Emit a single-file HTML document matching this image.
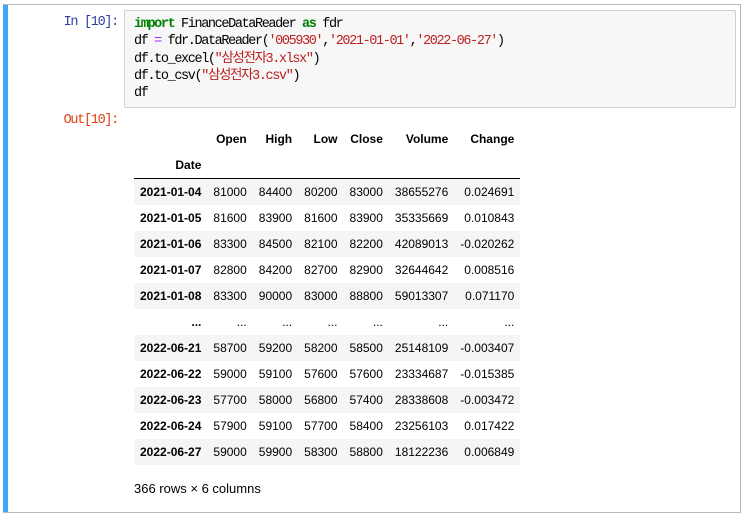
<!DOCTYPE html>
<html><head><meta charset="utf-8"><style>
body{margin:0;width:745px;height:516px;background:#fff;position:relative;overflow:hidden;font-family:"Liberation Sans","Noto Sans CJK KR",sans-serif}
.cell{position:absolute;left:3px;top:4px;width:737px;height:507px;border:1px solid #b8b8b8;border-left:none}
.bar{position:absolute;left:3px;top:5px;width:5px;height:507px;background:#42a5f5}
.pin{position:absolute;right:627px;font-family:"Liberation Mono",monospace;font-size:13.5px;letter-spacing:-1.3px}
.code{position:absolute;left:124px;top:10px;width:610px;height:96px;background:#f7f7f7;border:1px solid #cfcfcf;border-radius:2px}
pre{margin:0;position:absolute;left:9px;top:5px;font-family:"Liberation Mono","Noto Sans CJK KR",monospace;font-size:13.5px;letter-spacing:-1.38px;line-height:17.3px;color:#000}
.k{color:#008000;font-weight:bold}.s{color:#ba2121}.o{color:#aa22ff}
table{position:absolute;left:134px;top:126px;border-collapse:collapse;font-size:12px;color:#000}
td,th{text-align:right;padding:0 6px;height:26px;white-space:nowrap}
th{font-weight:bold}
tbody tr:nth-child(odd){background:#f5f5f5}
thead tr:last-child th{border-bottom:1px solid #000}
</style></head><body>
<div class="cell"></div><div class="bar"></div>
<div class="pin" style="top:15px;color:#303f9f">In [10]:</div>
<div class="pin" style="top:113px;color:#d84315">Out[10]:</div>
<div class="code"><pre><span class="k">import</span> FinanceDataReader <span class="k">as</span> fdr
df <span class="o">=</span> fdr.DataReader(<span class="s">'005930'</span>,<span class="s">'2021-01-01'</span>,<span class="s">'2022-06-27'</span>)
df.to_excel(<span class="s">"삼성전자3.xlsx"</span>)
df.to_csv(<span class="s">"삼성전자3.csv"</span>)
df</pre></div>
<table>
<thead>
<tr><th></th><th>Open</th><th>High</th><th>Low</th><th>Close</th><th style="padding-left:14px">Volume</th><th style="padding-left:14px">Change</th></tr>
<tr><th>Date</th><th></th><th></th><th></th><th></th><th></th><th></th></tr>
</thead>
<tbody>
<tr><th>2021-01-04</th><td>81000</td><td>84400</td><td>80200</td><td>83000</td><td>38655276</td><td>0.024691</td></tr>
<tr><th>2021-01-05</th><td>81600</td><td>83900</td><td>81600</td><td>83900</td><td>35335669</td><td>0.010843</td></tr>
<tr><th>2021-01-06</th><td>83300</td><td>84500</td><td>82100</td><td>82200</td><td>42089013</td><td>-0.020262</td></tr>
<tr><th>2021-01-07</th><td>82800</td><td>84200</td><td>82700</td><td>82900</td><td>32644642</td><td>0.008516</td></tr>
<tr><th>2021-01-08</th><td>83300</td><td>90000</td><td>83000</td><td>88800</td><td>59013307</td><td>0.071170</td></tr>
<tr><th>...</th><td>...</td><td>...</td><td>...</td><td>...</td><td>...</td><td>...</td></tr>
<tr><th>2022-06-21</th><td>58700</td><td>59200</td><td>58200</td><td>58500</td><td>25148109</td><td>-0.003407</td></tr>
<tr><th>2022-06-22</th><td>59000</td><td>59100</td><td>57600</td><td>57600</td><td>23334687</td><td>-0.015385</td></tr>
<tr><th>2022-06-23</th><td>57700</td><td>58000</td><td>56800</td><td>57400</td><td>28338608</td><td>-0.003472</td></tr>
<tr><th>2022-06-24</th><td>57900</td><td>59100</td><td>57700</td><td>58400</td><td>23256103</td><td>0.017422</td></tr>
<tr><th>2022-06-27</th><td>59000</td><td>59900</td><td>58300</td><td>58800</td><td>18122236</td><td>0.006849</td></tr>
</tbody></table>
<div style="position:absolute;left:134px;top:481px;font-size:13px">366 rows × 6 columns</div>
</body></html>
